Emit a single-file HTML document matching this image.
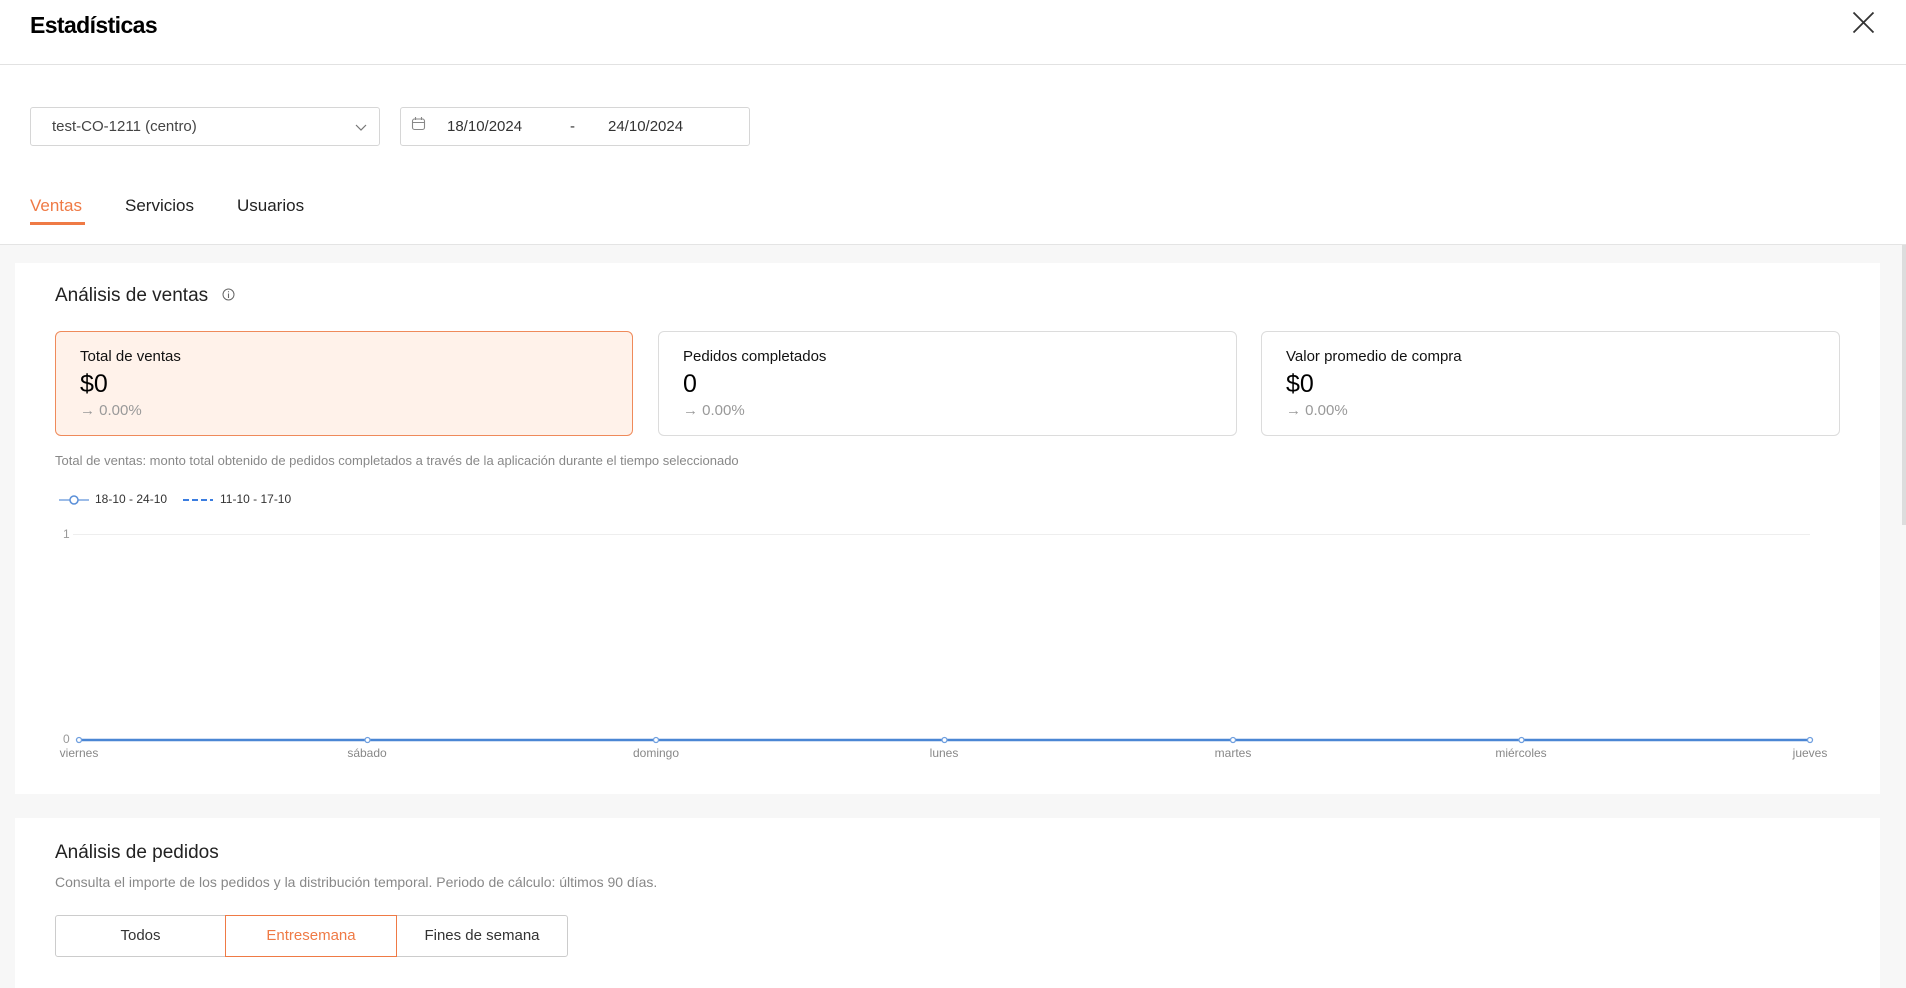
<!DOCTYPE html>
<html><head><meta charset="utf-8"><style>
*{box-sizing:border-box;margin:0;padding:0}
body{width:1906px;height:983px;overflow:hidden;background:#f7f7f7;font-family:"Liberation Sans",sans-serif;color:#222;position:relative}
.abs{position:absolute}
.top{position:absolute;left:0;top:0;width:1906px;height:245px;background:#fff;border-bottom:1px solid #e4e4e4}
.hdr{position:absolute;left:0;top:0;width:1906px;height:65px;border-bottom:1px solid #e2e2e2}
.box{position:absolute;border:1px solid #d6d6d6;border-radius:3px;background:#fff;height:39px;top:107px}
.card{position:absolute;background:#fff}
.kpi{position:absolute;top:331px;height:105px;border:1px solid #dcdcdc;border-radius:6px;background:#fff}
.kpi .l{position:absolute;left:24px;top:16px;font-size:15px;color:#111}
.kpi .v{position:absolute;left:24px;top:38px;font-size:25px;color:#000}
.kpi .p{position:absolute;left:24px;top:70px;font-size:15px;color:#999}
.xl{position:absolute;top:746px;font-size:12px;color:#888;transform:translateX(-50%)}
.btn{position:absolute;top:915px;height:42px;border:1px solid #ccc;font-size:15px;text-align:center;line-height:40px;color:#333;background:#fff}
</style></head><body>
<div class="top">
<div class="hdr"></div>
<div class="abs" style="left:30px;top:12px;font-size:23px;font-weight:bold;color:#000;letter-spacing:-0.6px">Estadísticas</div>
<svg class="abs" style="left:1852px;top:11px" width="23" height="23" viewBox="0 0 23 23"><path d="M1.5 1.5L21.5 21.5M21.5 1.5L1.5 21.5" stroke="#333" stroke-width="1.8"/></svg>
<div class="box" style="left:30px;width:350px"><span class="abs" style="left:21px;top:10px;font-size:15px;color:#444">test-CO-1211 (centro)</span>
<svg class="abs" style="left:324px;top:16px" width="12" height="8" viewBox="0 0 12 8"><path d="M1 1L6 6L11 1" fill="none" stroke="#777" stroke-width="1.2"/></svg></div>
<div class="box" style="left:400px;width:350px">
<svg class="abs" style="left:10px;top:8px" width="15" height="15" viewBox="0 0 15 15"><rect x="1.5" y="3" width="12" height="10.5" rx="2" fill="none" stroke="#888" stroke-width="1.1"/><path d="M1.5 6.5H13.5M4.5 1V4M10.5 1V4" stroke="#888" stroke-width="1.1"/></svg>
<span class="abs" style="left:46px;top:10px;font-size:15px;color:#333">18/10/2024</span>
<span class="abs" style="left:169px;top:10px;font-size:15px;color:#333">-</span>
<span class="abs" style="left:207px;top:10px;font-size:15px;color:#333">24/10/2024</span></div>
<div class="abs" style="left:30px;top:196px;font-size:17px;color:#ef7a45">Ventas</div>
<div class="abs" style="left:30px;top:222px;width:55px;height:3px;background:#ef7a45"></div>
<div class="abs" style="left:125px;top:196px;font-size:17px;color:#222">Servicios</div>
<div class="abs" style="left:237px;top:196px;font-size:17px;color:#222">Usuarios</div>
</div>

<div class="card" style="left:15px;top:263px;width:1865px;height:531px"></div>
<div class="abs" style="left:55px;top:285px;font-size:19px;color:#222">Análisis de ventas</div>
<svg class="abs" style="left:222px;top:288px" width="13" height="13" viewBox="0 0 13 13"><circle cx="6.5" cy="6.5" r="5.5" fill="none" stroke="#666" stroke-width="1"/><path d="M6.5 5.5V10M6.5 3.3V4.3" stroke="#666" stroke-width="1.1"/></svg>
<div class="kpi" style="left:55px;width:578px;background:#fff2ea;border-color:#ef8a5a"><div class="l">Total de ventas</div><div class="v">$0</div><div class="p">→ 0.00%</div></div>
<div class="kpi" style="left:658px;width:579px"><div class="l">Pedidos completados</div><div class="v">0</div><div class="p">→ 0.00%</div></div>
<div class="kpi" style="left:1261px;width:579px"><div class="l">Valor promedio de compra</div><div class="v">$0</div><div class="p">→ 0.00%</div></div>
<div class="abs" style="left:55px;top:453px;font-size:13px;color:#888">Total de ventas: monto total obtenido de pedidos completados a través de la aplicación durante el tiempo seleccionado</div>
<svg class="abs" style="left:0;top:480px" width="1906" height="270" viewBox="0 480 1906 270">
<path d="M59 500H89" stroke="#7ba6e0" stroke-width="1.5"/><circle cx="74" cy="500" r="4" fill="#fff" stroke="#5a8fd8" stroke-width="1.5"/>
<path d="M183 500H213" stroke="#3b7de0" stroke-width="2" stroke-dasharray="6 3"/>
<path d="M73 534.5H1810" stroke="#eee" stroke-width="1"/>
<path d="M79 740H1810" stroke="#4a86d4" stroke-width="2.5"/>
<g fill="#fff" stroke="#6f9fdf" stroke-width="1.3">
<circle cx="79" cy="740" r="2.5"/><circle cx="367.5" cy="740" r="2.5"/><circle cx="656" cy="740" r="2.5"/><circle cx="944.5" cy="740" r="2.5"/><circle cx="1233" cy="740" r="2.5"/><circle cx="1521.5" cy="740" r="2.5"/><circle cx="1810" cy="740" r="2.5"/></g>
</svg>
<div class="abs" style="left:95px;top:492px;font-size:12px;color:#333">18-10 - 24-10</div>
<div class="abs" style="left:220px;top:492px;font-size:12px;color:#333">11-10 - 17-10</div>
<div class="abs" style="left:63px;top:527px;font-size:12px;color:#999">1</div>
<div class="abs" style="left:63px;top:732px;font-size:12px;color:#999">0</div>
<div class="xl" style="left:79px">viernes</div>
<div class="xl" style="left:367px">sábado</div>
<div class="xl" style="left:656px">domingo</div>
<div class="xl" style="left:944px">lunes</div>
<div class="xl" style="left:1233px">martes</div>
<div class="xl" style="left:1521px">miércoles</div>
<div class="xl" style="left:1810px">jueves</div>

<div class="card" style="left:15px;top:818px;width:1865px;height:170px"></div>
<div class="abs" style="left:55px;top:842px;font-size:19px;color:#222">Análisis de pedidos</div>
<div class="abs" style="left:55px;top:874px;font-size:14px;color:#888">Consulta el importe de los pedidos y la distribución temporal. Periodo de cálculo: últimos 90 días.</div>
<div class="btn" style="left:55px;width:171px;border-radius:3px 0 0 3px">Todos</div>
<div class="btn" style="left:396px;width:172px;border-radius:0 3px 3px 0">Fines de semana</div>
<div class="btn" style="left:225px;width:172px;border-color:#ef7a45;color:#ef7a45">Entresemana</div>
<div class="abs" style="left:1902px;top:245px;width:4px;height:280px;background:#ddd"></div>
</body></html>
